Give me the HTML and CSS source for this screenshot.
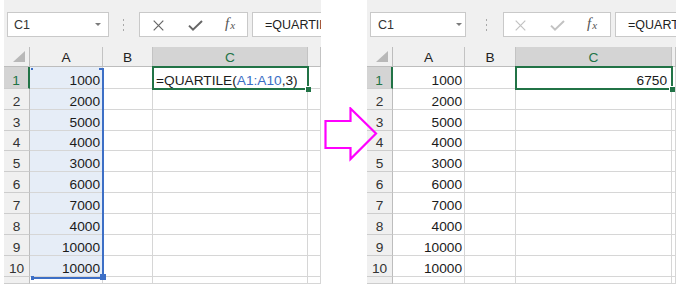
FILE: index.html
```html
<!DOCTYPE html>
<html>
<head>
<meta charset="utf-8">
<link rel="stylesheet" href="styles.css">
</head>
<body>
<div class="stage">
  <div class="panel left">
    <div class="fbar">
      <div class="namebox"><span>C1</span><span class="dd"></span></div>
      <div class="grip"><i></i><i></i><i></i></div>
      <div class="btns">
        <svg class="ix" width="11" height="11" viewBox="0 0 11 11"><path d="M0.7 0.7 L10.3 10.3 M10.3 0.7 L0.7 10.3"/></svg>
        <svg class="ic" width="15" height="11" viewBox="0 0 15 11"><path d="M1 5.6 L5 9.6 L14 1"/></svg>
        <span class="fx"><i>f</i><sub>x</sub></span>
      </div>
      <div class="input">=QUARTILE(A1:A10,3)</div>
    </div>
    <div class="sheet">
      <div class="corner"><svg width="13" height="12" viewBox="0 0 13 12"><polygon points="12,0 12,11 0,11"/></svg></div>
      <div class="ch">A</div><div class="ch">B</div><div class="ch on">C</div><div class="ch"></div>

      <div class="rh on">1</div><div class="c n sel first">1000<div class="range"><span class="h tl"></span><span class="h tr"></span><span class="h bl"></span><span class="h br"></span></div></div><div class="c"></div><div class="c f act">=QUARTILE(<span class="ref">A1:A10</span>,3)<div class="active"><span class="handle"></span></div></div><div class="c"></div>
      <div class="rh">2</div><div class="c n sel">2000</div><div class="c"></div><div class="c"></div><div class="c"></div>
      <div class="rh">3</div><div class="c n sel">5000</div><div class="c"></div><div class="c"></div><div class="c"></div>
      <div class="rh">4</div><div class="c n sel">4000</div><div class="c"></div><div class="c"></div><div class="c"></div>
      <div class="rh">5</div><div class="c n sel">3000</div><div class="c"></div><div class="c"></div><div class="c"></div>
      <div class="rh">6</div><div class="c n sel">6000</div><div class="c"></div><div class="c"></div><div class="c"></div>
      <div class="rh">7</div><div class="c n sel">7000</div><div class="c"></div><div class="c"></div><div class="c"></div>
      <div class="rh">8</div><div class="c n sel">4000</div><div class="c"></div><div class="c"></div><div class="c"></div>
      <div class="rh">9</div><div class="c n sel">10000</div><div class="c"></div><div class="c"></div><div class="c"></div>
      <div class="rh">10</div><div class="c n sel">10000</div><div class="c"></div><div class="c"></div><div class="c"></div>
      <div class="rh"></div><div class="c"></div><div class="c"></div><div class="c"></div><div class="c"></div>
    </div>
  </div>

  <svg class="arrow" width="56" height="56" viewBox="0 0 56 56"><polygon points="1.5,14 26.5,14 26.5,1.5 52,26.5 26.5,52 26.5,41 1.5,41"/></svg>

  <div class="panel right">
    <div class="fbar">
      <div class="namebox"><span>C1</span><span class="dd"></span></div>
      <div class="grip"><i></i><i></i><i></i></div>
      <div class="btns dim">
        <svg class="ix" width="11" height="11" viewBox="0 0 11 11"><path d="M0.7 0.7 L10.3 10.3 M10.3 0.7 L0.7 10.3"/></svg>
        <svg class="ic" width="15" height="11" viewBox="0 0 15 11"><path d="M1 5.6 L5 9.6 L14 1"/></svg>
        <span class="fx"><i>f</i><sub>x</sub></span>
      </div>
      <div class="input">=QUARTILE(A1:A10,3)</div>
    </div>
    <div class="sheet">
      <div class="corner"><svg width="13" height="12" viewBox="0 0 13 12"><polygon points="12,0 12,11 0,11"/></svg></div>
      <div class="ch">A</div><div class="ch">B</div><div class="ch on">C</div><div class="ch"></div>

      <div class="rh on">1</div><div class="c n">1000</div><div class="c"></div><div class="c n wide act">6750<div class="active"><span class="handle"></span></div></div><div class="c"></div>
      <div class="rh">2</div><div class="c n">2000</div><div class="c"></div><div class="c"></div><div class="c"></div>
      <div class="rh">3</div><div class="c n">5000</div><div class="c"></div><div class="c"></div><div class="c"></div>
      <div class="rh">4</div><div class="c n">4000</div><div class="c"></div><div class="c"></div><div class="c"></div>
      <div class="rh">5</div><div class="c n">3000</div><div class="c"></div><div class="c"></div><div class="c"></div>
      <div class="rh">6</div><div class="c n">6000</div><div class="c"></div><div class="c"></div><div class="c"></div>
      <div class="rh">7</div><div class="c n">7000</div><div class="c"></div><div class="c"></div><div class="c"></div>
      <div class="rh">8</div><div class="c n">4000</div><div class="c"></div><div class="c"></div><div class="c"></div>
      <div class="rh">9</div><div class="c n">10000</div><div class="c"></div><div class="c"></div><div class="c"></div>
      <div class="rh">10</div><div class="c n">10000</div><div class="c"></div><div class="c"></div><div class="c"></div>
      <div class="rh"></div><div class="c"></div><div class="c"></div><div class="c"></div><div class="c"></div>
    </div>
  </div>
</div>
</body>
</html>
```

FILE: styles.css
```css
* { box-sizing: border-box; }
html, body { margin: 0; padding: 0; background: #fff; }
body { font-family: "Liberation Sans", Arial, sans-serif; color: #1b1b1b; }

.stage { position: relative; display: flex; height: 284px; overflow: hidden; }

.panel { height: 284px; overflow: hidden; background: #f0f0f0; display: flex; flex-direction: column; flex-shrink: 0; }
.panel.left { margin-left: 4px; width: 317px; }
.panel.right { margin-left: 46px; width: 309px; }

/* formula bar */
.fbar { display: flex; margin-top: 12px; height: 25px; padding-left: 3px; flex-shrink: 0; }
.namebox { display: flex; align-items: center; justify-content: space-between; background: #fff; border: 1px solid #c9c9c9; font-size: 12.5px; color: #333; line-height: 23px; padding-top: 1px; flex-shrink: 0; }
.left .namebox { width: 102px; padding-left: 6px; padding-right: 7px; }
.right .namebox { width: 96px; padding-left: 7px; padding-right: 3px; }
.dd { width: 0; height: 0; border-left: 3px solid transparent; border-right: 3px solid transparent; border-top: 3px solid #7b7b7b; margin-top: -1px; }

.grip { display: flex; flex-direction: column; justify-content: center; gap: 3px; flex-shrink: 0; }
.grip i { display: block; width: 1px; height: 2px; background: #a8a8a8; }
.left .grip { width: 30px; padding-left: 14px; }
.right .grip { width: 37px; padding-left: 20px; }

.btns { display: flex; align-items: center; width: 109px; background: #fff; border: 1px solid #c9c9c9; flex-shrink: 0; padding-left: 13px; }
.right .btns { width: 108px; padding-left: 11px; }
.btns svg { fill: none; stroke: #666; }
.ix { stroke-width: 1.2; margin-top: 1px; }
.ic { stroke-width: 2; margin-left: 24px; margin-top: 1px; }
.fx { margin-left: 22px; font-family: "Liberation Serif", "Times New Roman", serif; color: #555; font-size: 15px; line-height: 1; margin-top: -3px; }
.fx i { font-style: italic; }
.fx sub { font-style: italic; font-size: 11px; vertical-align: -1px; margin-left: 1px; }
.dim svg { stroke: #c2c2c2; }

.input { margin-left: 4px; width: 220px; flex-shrink: 0; background: #fff; border: 1px solid #c9c9c9; font-size: 12.5px; line-height: 23px; padding-top: 1px; padding-left: 12px; color: #222; white-space: nowrap; }

/* sheet grid */
.sheet { margin-top: 10px; flex: 1; display: grid; grid-template-rows: 20px 22px 21px 21px 20px 21px 21px 21px 21px 21px 21px 1fr; background: #fff; }
.left .sheet { grid-template-columns: 26px 73px 50px 155px 1fr; }
.right .sheet { grid-template-columns: 26px 72px 51px 156px 1fr; }

.corner { background: #f0f0f0; border-right: 1px solid #bdbdbd; border-bottom: 1px solid #bdbdbd; display: flex; align-items: flex-end; justify-content: flex-end; padding: 0 3px 3px 0; }
.corner svg { fill: #b8b8b8; }

.ch { background: #f0f0f0; border-right: 1px solid #c3c3c3; border-bottom: 1px solid #bdbdbd; font-size: 13.7px; line-height: 13px; display: flex; align-items: flex-end; justify-content: center; padding-bottom: 2px; color: #222; }
.ch.on { background: #d4d4d4; color: #217346; border-bottom-color: #217346; }

.rh { background: #f0f0f0; border-right: 1px solid #bdbdbd; border-bottom: 1px solid #cdcdcd; font-size: 13.7px; line-height: 13px; display: flex; align-items: flex-end; justify-content: center; padding-bottom: 1px; color: #333; }
.rh.on { background: #d4d4d4; color: #217346; border-right: 2px solid #217346; }

.c { border-right: 1px solid #d6d6d6; border-bottom: 1px solid #d6d6d6; font-size: 13.7px; line-height: 13px; display: flex; align-items: flex-end; padding-bottom: 1px; white-space: nowrap; color: #1b1b1b; }
.c.n { justify-content: flex-end; padding-right: 2px; }
.c.wide { padding-right: 4px; }
.c.f { padding-left: 3px; }
.c.sel { background: #e6edf7; }
.ref { color: #3a6ec4; }
.c.first, .c.act { position: relative; }
.c.first { z-index: 2; }

/* reference range highlight (left), spans rows 1-10 of column A */
.range { position: absolute; left: 1px; top: 1px; right: -2px; height: 211px; border-right: 2px solid #3d6fc6; border-bottom: 2px solid #3d6fc6; }
.range .h { position: absolute; background: #3d6fc6; }
.range .tl { left: 0; top: 0; width: 2px; height: 2px; }
.range .tr { right: -2px; top: 0; width: 5px; height: 2px; }
.range .bl { left: 0; bottom: -3px; width: 3px; height: 4px; }
.range .br { right: -4px; bottom: -3px; width: 6px; height: 6px; }

/* active cell */
.active { position: absolute; left: -1px; top: -1px; right: -2px; bottom: -2px; border: 2px solid #217346; z-index: 3; }
.handle { position: absolute; right: -4px; bottom: -4px; width: 6px; height: 6px; background: #217346; border-left: 1px solid #fff; border-top: 1px solid #fff; }

.arrow { position: absolute; left: 324px; top: 107px; z-index: 5; }
.arrow polygon { fill: none; stroke: #ff00ff; stroke-width: 2.2; }
```
